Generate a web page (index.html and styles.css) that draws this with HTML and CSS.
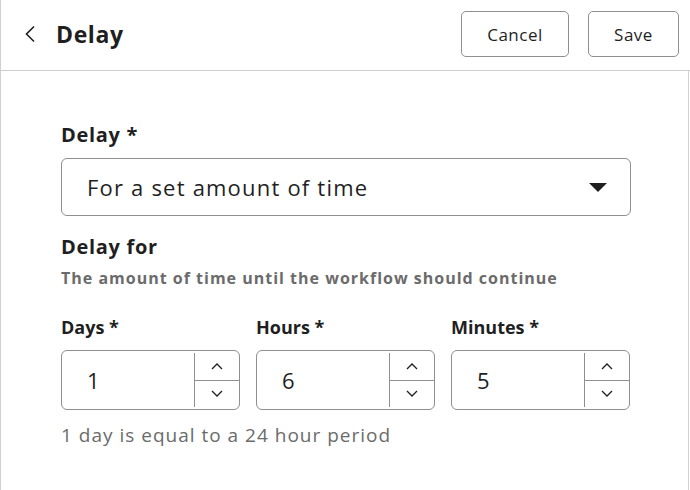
FILE: index.html
```html
<!DOCTYPE html>
<html lang="en">
<head>
<meta charset="utf-8">
<title>Delay</title>
<link rel="stylesheet" href="styles.css">
</head>
<body>
<div class="panel">
  <header class="header">
    <div class="title-group">
      <button class="back" aria-label="Back">
        <svg width="12" height="18" viewBox="0 0 12 18"><path d="M10 1.5 L2.5 9 L10 16.5" fill="none" stroke="#1f1f1f" stroke-width="1.6"/></svg>
      </button>
      <h1 class="title">Delay</h1>
    </div>
    <div class="actions">
      <button class="btn btn-cancel">Cancel</button>
      <button class="btn btn-save">Save</button>
    </div>
  </header>
  <main class="body">
    <form class="form">
      <div class="label label-lg">Delay *</div>
      <div class="select">
        <span class="select-text">For a set amount of time</span>
        <svg class="caret" width="18" height="9" viewBox="0 0 18 9"><path d="M0 0 H18 L9 9 Z" fill="#1f1f1f"/></svg>
      </div>
      <div class="label label-lg section">Delay for</div>
      <div class="desc">The amount of time until the workflow should continue</div>
      <div class="row">
        <div class="col">
          <div class="label">Days *</div>
          <div class="number">
            <span class="value">1</span>
            <div class="spin">
              <span class="spin-btn"><svg width="12" height="7" viewBox="0 0 12 7"><path d="M1 6 L6 1 L11 6" fill="none" stroke="#1f1f1f" stroke-width="1.3"/></svg></span>
              <span class="spin-btn"><svg width="12" height="7" viewBox="0 0 12 7"><path d="M1 1 L6 6 L11 1" fill="none" stroke="#1f1f1f" stroke-width="1.3"/></svg></span>
            </div>
          </div>
        </div>
        <div class="col">
          <div class="label">Hours *</div>
          <div class="number">
            <span class="value">6</span>
            <div class="spin">
              <span class="spin-btn"><svg width="12" height="7" viewBox="0 0 12 7"><path d="M1 6 L6 1 L11 6" fill="none" stroke="#1f1f1f" stroke-width="1.3"/></svg></span>
              <span class="spin-btn"><svg width="12" height="7" viewBox="0 0 12 7"><path d="M1 1 L6 6 L11 1" fill="none" stroke="#1f1f1f" stroke-width="1.3"/></svg></span>
            </div>
          </div>
        </div>
        <div class="col">
          <div class="label">Minutes *</div>
          <div class="number">
            <span class="value">5</span>
            <div class="spin">
              <span class="spin-btn"><svg width="12" height="7" viewBox="0 0 12 7"><path d="M1 6 L6 1 L11 6" fill="none" stroke="#1f1f1f" stroke-width="1.3"/></svg></span>
              <span class="spin-btn"><svg width="12" height="7" viewBox="0 0 12 7"><path d="M1 1 L6 6 L11 1" fill="none" stroke="#1f1f1f" stroke-width="1.3"/></svg></span>
            </div>
          </div>
        </div>
      </div>
      <div class="help">1 day is equal to a 24 hour period</div>
    </form>
  </main>
</div>
</body>
</html>
```

FILE: styles.css
```css
* { box-sizing: border-box; }
html, body {
  margin: 0;
  padding: 0;
  background: #ffffff;
}
body {
  font-family: "Open Sans", "Noto Sans", sans-serif;
  color: #1f1f1f;
  width: 690px;
  height: 490px;
  overflow: hidden;
}
.panel {
  border-left: 1px solid #cfcfcf;
  height: 490px;
  width: 690px;
}
.header {
  height: 71px;
  border-bottom: 1px solid #cfcfcf;
  display: flex;
  align-items: center;
  justify-content: space-between;
  padding: 0 11px 2px 23px;
}
.title-group {
  display: flex;
  align-items: center;
  gap: 19px;
}
.back {
  border: 0;
  background: none;
  padding: 0;
  display: flex;
  width: 13px;
}
.title {
  margin: 0;
  font-size: 23px;
  font-weight: 700;
  line-height: 30px;
  letter-spacing: 0.6px;
}
.actions {
  display: flex;
  gap: 19px;
}
.btn {
  height: 46px;
  border: 1px solid #8f8f8f;
  border-radius: 5px;
  background: #fff;
  font-family: inherit;
  font-size: 17px;
  letter-spacing: 0.5px;
  color: #1f1f1f;
  padding: 0;
}
.btn-cancel { width: 108px; }
.btn-save { width: 91px; }
.body {
  border-right: 1px solid #cfcfcf;
  width: 688px;
  height: 419px;
  padding: 52px 0 0 60px;
}
.form {
  width: 570px;
}
.label {
  font-size: 18px;
  font-weight: 700;
  line-height: 24px;
}
.label-lg {
  font-size: 20px;
  letter-spacing: 0.7px;
}
.select {
  margin-top: 11px;
  height: 58px;
  border: 1px solid #8f8f8f;
  border-radius: 6px;
  display: flex;
  align-items: center;
  justify-content: space-between;
  padding: 0 23px 0 25px;
}
.select-text {
  font-size: 22px;
  letter-spacing: 1.2px;
}
.section {
  margin-top: 19px;
}
.desc {
  margin-top: 9px;
  font-size: 16px;
  font-weight: 700;
  line-height: 20px;
  letter-spacing: 1px;
  color: #6b6b6b;
}
.row {
  margin-top: 27px;
  display: grid;
  grid-template-columns: repeat(3, 179px);
  column-gap: 16px;
}
.number {
  margin-top: 11px;
  height: 60px;
  border: 1px solid #8f8f8f;
  border-radius: 6px;
  display: flex;
  overflow: hidden;
}
.value {
  flex: 1;
  display: flex;
  align-items: center;
  padding-left: 25px;
  font-size: 22px;
}
.spin {
  width: 45px;
  border-left: 1px solid #8f8f8f;
  display: flex;
  flex-direction: column;
  margin: 2px 0;
}
.spin-btn {
  flex: 1;
  display: flex;
  align-items: center;
  justify-content: center;
}
.spin-btn + .spin-btn {
  border-top: 1px solid #8f8f8f;
}
.help {
  margin-top: 13px;
  font-size: 19px;
  line-height: 24px;
  letter-spacing: 1px;
  color: #6b6b6b;
}
```
